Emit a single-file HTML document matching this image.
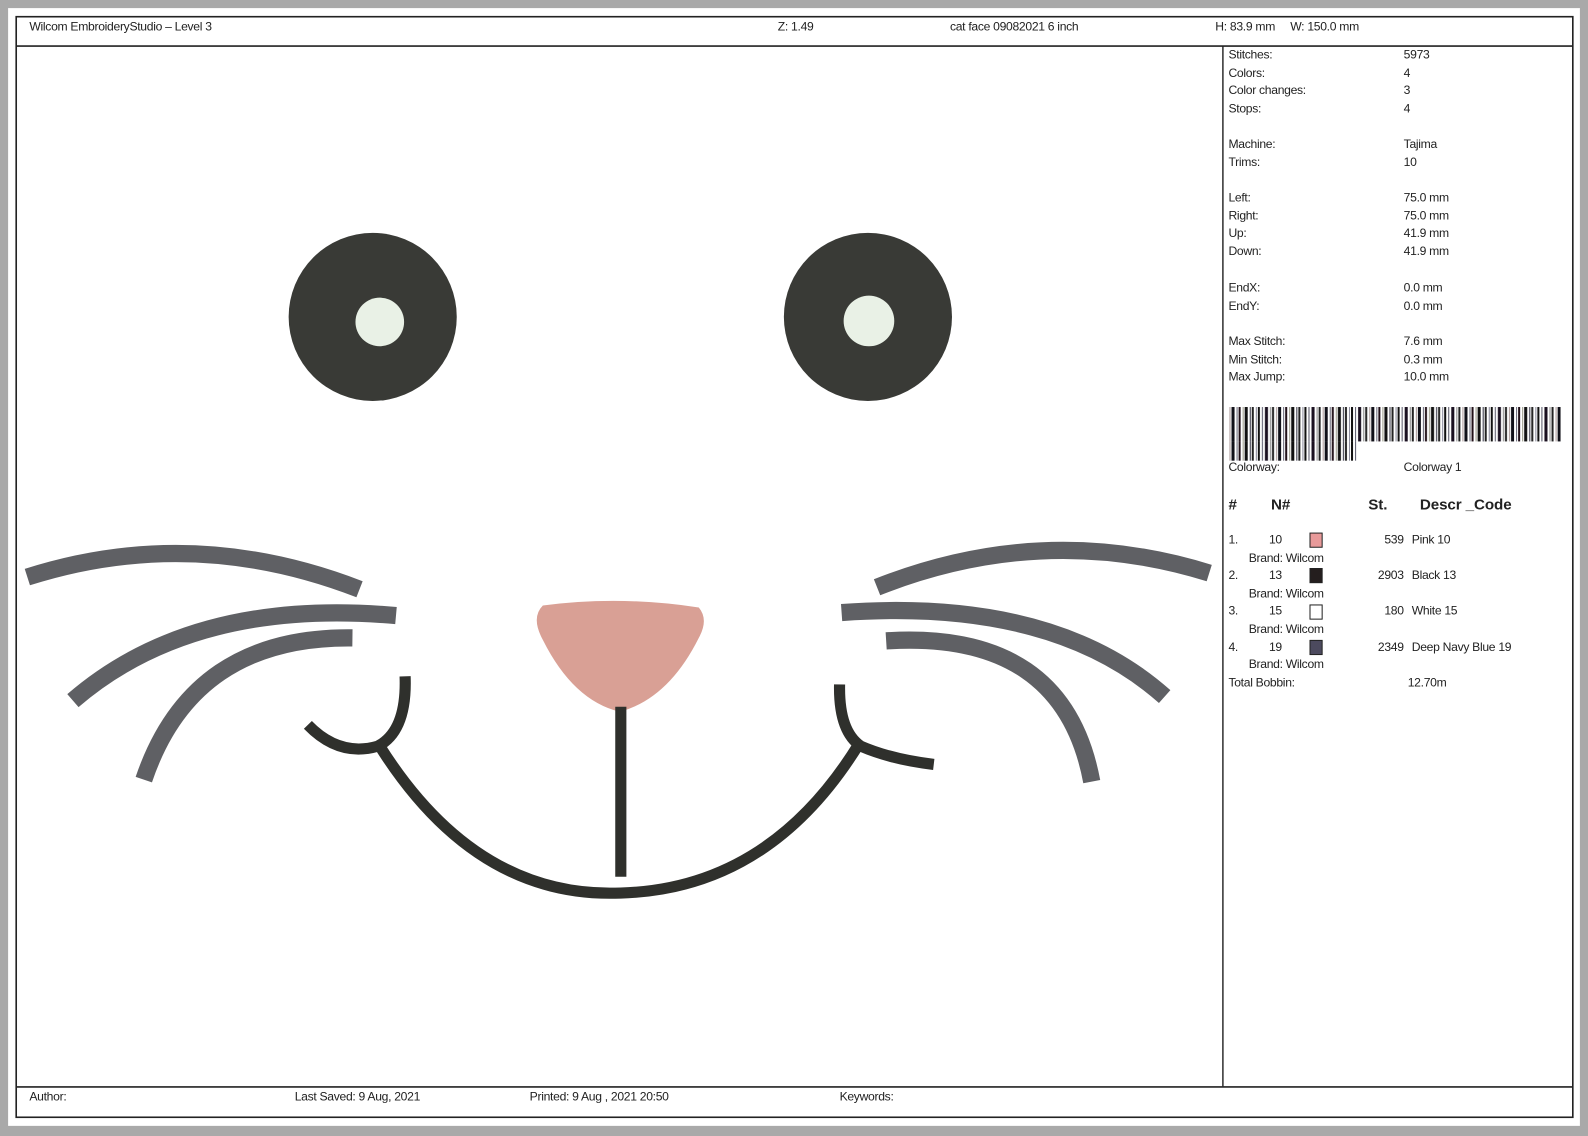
<!DOCTYPE html>
<html><head><meta charset="utf-8">
<style>
html,body{margin:0;padding:0;background:#a9a9a9;}
svg{display:block;}
text{font-family:"Liberation Sans",Arial,sans-serif;fill:#222;}
</style></head>
<body>
<svg width="1588" height="1136" viewBox="0 0 1568 1122" preserveAspectRatio="none" xmlns="http://www.w3.org/2000/svg">
<defs>
<pattern id="bc" width="46" height="60" patternUnits="userSpaceOnUse">
<rect x="0" y="0" width="46" height="60" fill="#fff"/>
<rect x="0" width="2" height="60" fill="#111"/>
<rect x="4" width="1" height="60" fill="#556"/>
<rect x="7" width="3" height="60" fill="#1a1020"/>
<rect x="12" width="1" height="60" fill="#888"/>
<rect x="14" width="2" height="60" fill="#222"/>
<rect x="18" width="1" height="60" fill="#a99"/>
<rect x="20" width="3" height="60" fill="#101018"/>
<rect x="25" width="1" height="60" fill="#667"/>
<rect x="27" width="2" height="60" fill="#201018"/>
<rect x="31" width="1" height="60" fill="#998"/>
<rect x="33" width="3" height="60" fill="#111"/>
<rect x="38" width="1" height="60" fill="#334"/>
<rect x="40" width="2" height="60" fill="#222"/>
<rect x="44" width="1" height="60" fill="#889"/>
</pattern>
</defs>
<rect x="0" y="0" width="1568" height="1122" fill="#a9a9a9"/>
<rect x="8" y="8" width="1552" height="1104" fill="#fff"/>
<rect x="16" y="16.5" width="1537" height="1087" fill="none" stroke="#222" stroke-width="1.6"/>
<line x1="16" y1="45.5" x2="1553" y2="45.5" stroke="#222" stroke-width="1.6"/>
<line x1="16" y1="1073.5" x2="1553" y2="1073.5" stroke="#222" stroke-width="1.6"/>
<line x1="1207.5" y1="45" x2="1207.5" y2="1073" stroke="#222" stroke-width="1.4"/>

<g font-size="12" letter-spacing="-0.3">
<text x="29" y="30">Wilcom EmbroideryStudio – Level 3</text>
<text x="768" y="30">Z: 1.49</text>
<text x="938" y="30">cat face 09082021 6 inch</text>
<text x="1200" y="30">H: 83.9 mm</text>
<text x="1274" y="30">W: 150.0 mm</text>

<text x="1213" y="58">Stitches:</text><text x="1386" y="58">5973</text>
<text x="1213" y="76">Colors:</text><text x="1386" y="76">4</text>
<text x="1213" y="93">Color changes:</text><text x="1386" y="93">3</text>
<text x="1213" y="111">Stops:</text><text x="1386" y="111">4</text>
<text x="1213" y="146">Machine:</text><text x="1386" y="146">Tajima</text>
<text x="1213" y="164">Trims:</text><text x="1386" y="164">10</text>
<text x="1213" y="199">Left:</text><text x="1386" y="199">75.0 mm</text>
<text x="1213" y="217">Right:</text><text x="1386" y="217">75.0 mm</text>
<text x="1213" y="234">Up:</text><text x="1386" y="234">41.9 mm</text>
<text x="1213" y="252">Down:</text><text x="1386" y="252">41.9 mm</text>
<text x="1213" y="288">EndX:</text><text x="1386" y="288">0.0 mm</text>
<text x="1213" y="306">EndY:</text><text x="1386" y="306">0.0 mm</text>
<text x="1213" y="341">Max Stitch:</text><text x="1386" y="341">7.6 mm</text>
<text x="1213" y="359">Min Stitch:</text><text x="1386" y="359">0.3 mm</text>
<text x="1213" y="376">Max Jump:</text><text x="1386" y="376">10.0 mm</text>
</g>
<rect x="1213" y="402" width="328" height="34" fill="url(#bc)"/>
<rect x="1213" y="436" width="127" height="19" fill="url(#bc)"/>
<g font-size="12" letter-spacing="-0.3">
<text x="1213" y="465">Colorway:</text><text x="1386" y="465">Colorway 1</text>
</g>
<g font-size="15" font-weight="bold" letter-spacing="-0.1">
<text x="1213" y="503">#</text><text x="1255" y="503">N#</text><text x="1351" y="503">St.</text><text x="1402" y="503">Descr _Code</text>
</g>
<g font-size="12" letter-spacing="-0.3">
<text x="1213" y="537">1.</text><text x="1253" y="537">10</text><rect x="1293.5" y="526.5" width="12" height="14" fill="#e89a9a" stroke="#222"/><text x="1386" y="537" text-anchor="end">539</text><text x="1394" y="537">Pink 10</text>
<text x="1233" y="555">Brand: Wilcom</text>
<text x="1213" y="572">2.</text><text x="1253" y="572">13</text><rect x="1293.5" y="561.5" width="12" height="14" fill="#241e1e" stroke="#222"/><text x="1386" y="572" text-anchor="end">2903</text><text x="1394" y="572">Black 13</text>
<text x="1233" y="590">Brand: Wilcom</text>
<text x="1213" y="607">3.</text><text x="1253" y="607">15</text><rect x="1293.5" y="597.5" width="12" height="14" fill="#fff" stroke="#222"/><text x="1386" y="607" text-anchor="end">180</text><text x="1394" y="607">White 15</text>
<text x="1233" y="625">Brand: Wilcom</text>
<text x="1213" y="643">4.</text><text x="1253" y="643">19</text><rect x="1293.5" y="632.5" width="12" height="14" fill="#4c4a5e" stroke="#222"/><text x="1386" y="643" text-anchor="end">2349</text><text x="1394" y="643">Deep Navy Blue 19</text>
<text x="1233" y="660">Brand: Wilcom</text>
<text x="1213" y="678">Total Bobbin:</text><text x="1390" y="678">12.70m</text>

<text x="29" y="1087">Author:</text>
<text x="291" y="1087">Last Saved:  9 Aug, 2021</text>
<text x="523" y="1087">Printed:  9 Aug , 2021 20:50</text>
<text x="829" y="1087">Keywords:</text>
</g>

<g>
<circle cx="368" cy="313" r="83" fill="#393a36"/>
<circle cx="375" cy="318" r="24" fill="#e9f1e6"/>
<circle cx="857" cy="313" r="83" fill="#393a36"/>
<circle cx="858" cy="317" r="25" fill="#e9f1e6"/>

<g fill="none" stroke="#5f6064" stroke-width="17" stroke-linecap="butt">
<path d="M27,570 Q190,518 355,582"/>
<path d="M72,692 Q190,590 391,608"/>
<path d="M142,770 Q190,628 348,630"/>
<path d="M866,580 Q1030,515 1194,566"/>
<path d="M831,605 Q1040,590 1150,688"/>
<path d="M875,633 Q1050,622 1078,772"/>
</g>

<path d="M536,598 Q612,588 690,600 Q700,612 690,630 Q660,690 612,703 Q566,692 536,632 Q524,610 536,598Z" fill="#d9a095"/>

<g fill="none" stroke="#2f302c" stroke-width="11" stroke-linecap="butt">
<line x1="613" y1="698" x2="613" y2="866"/>
<path d="M375,737 Q470,888 613,882 Q760,878 848,735"/>
<path d="M400,668 Q402,722 373,737 Q335,748 304,716"/>
<path d="M829,676 Q828,722 850,737 Q880,750 922,755"/>
</g>
</g>
</svg>
</body></html>
